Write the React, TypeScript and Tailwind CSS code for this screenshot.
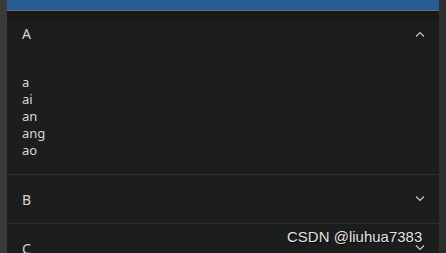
import React from "react";

const Chevron = ({ up }: { up?: boolean }) => (
  <svg width="10" height="6" viewBox="0 0 10 6" className="text-[#c8c8c8]">
    <path
      d={up ? "M1 5.5 L5 1.5 L9 5.5" : "M1 0.5 L5 4.5 L9 0.5"}
      fill="none"
      stroke="currentColor"
      strokeWidth="1.2"
    />
  </svg>
);

function App() {
  const items = ["a", "ai", "an", "ang", "ao"];
  return (
    <div
      className="w-[446px] h-[253px] overflow-hidden bg-[#3a3a3a] flex flex-row relative"
      style={{ fontFamily: '"Noto Sans", "Open Sans", sans-serif' }}
    >
      <div className="w-[7px] shrink-0" />
      <div className="w-[432px] flex flex-col bg-[#1c1d1d] text-[#d6d6d6]">
        <div className="h-[10px] bg-[#285b91] shrink-0" />
        <div className="h-[1px] bg-[#6e6e6e] shrink-0" />

        {/* A panel */}
        <div className="h-[45px] shrink-0 flex items-center justify-between pl-[15px] pr-[14px] bg-gradient-to-b from-[#161717] to-[#1c1d1d] to-[30%]">
          <span className="text-[14px]">A</span>
          <Chevron up />
        </div>
        <div className="pt-[18px] pb-[15px] pl-[15px] flex flex-col text-[13px] leading-[17px]">
          {items.map((t) => (
            <span key={t}>{t}</span>
          ))}
        </div>
        <div className="h-[1px] bg-[#2e2d3b] shrink-0" />

        {/* B panel */}
        <div className="h-[48px] shrink-0 flex items-center justify-between pl-[15px] pr-[14px]">
          <span className="text-[14px]">B</span>
          <Chevron />
        </div>
        <div className="h-[1px] bg-[#2e2d3b] shrink-0" />

        {/* C panel */}
        <div className="h-[48px] shrink-0 flex items-center justify-between pl-[15px] pr-[14px]">
          <span className="text-[14px]">C</span>
          <Chevron />
        </div>
      </div>
      <div className="w-[7px] shrink-0 bg-[#2d2d2d]" />

      {/* watermark */}
      <span
        className="absolute left-[287px] top-[226px] text-[15px] text-[#e2e2e2] [text-shadow:1px_1px_1px_rgba(0,0,0,0.8)]"
        style={{ fontFamily: '"Liberation Sans", Arial, sans-serif' }}
      >
        CSDN @liuhua7383
      </span>
    </div>
  );
}

export default App;
